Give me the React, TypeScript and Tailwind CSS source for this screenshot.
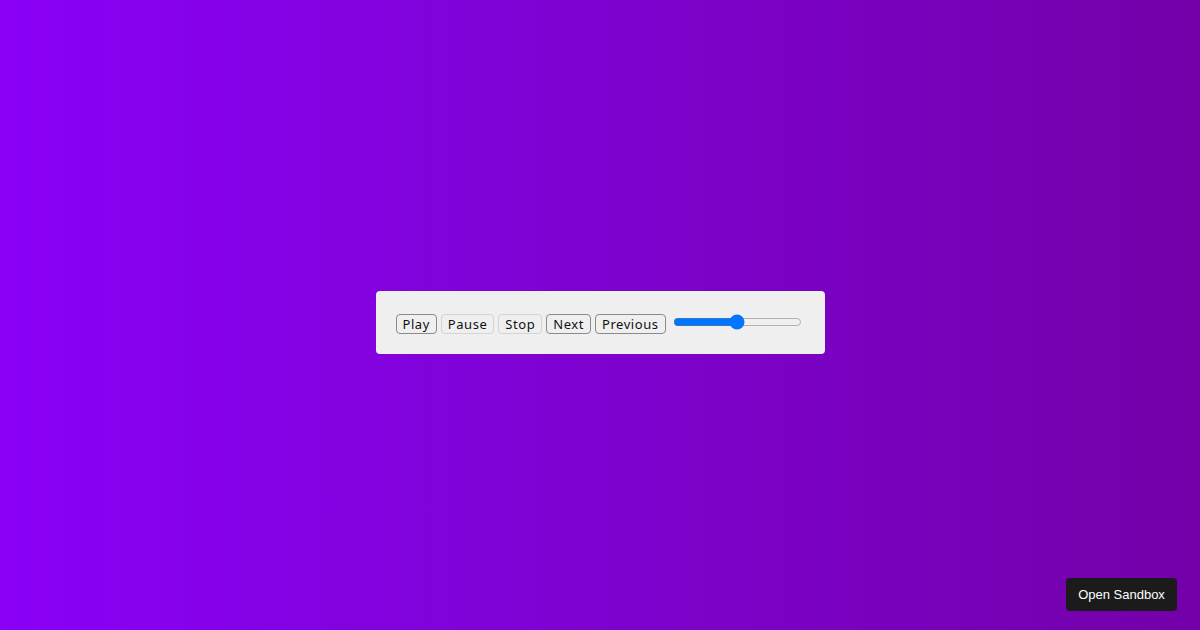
import React from "react";

const btn =
  "h-[20px] px-[6px] rounded-[4px] border bg-[#efefef] text-[13px] leading-none tracking-[0.55px] text-[#111] flex items-center";

export default function App() {
  return (
    <div className="relative w-full h-[630px] bg-gradient-to-r from-[#8a00f8] to-[#7300a9] flex items-center justify-center pt-[15px] font-['Noto_Sans',sans-serif]">
      <div className="w-[449px] h-[63px] bg-[#efefef] rounded-[4px] flex items-center pl-[20px] pt-[3px] gap-[4px]">
        <button className={`${btn} border-[#8a8a8a]`}>Play</button>
        <button className={`${btn} border-[#d4d4d4]`}>Pause</button>
        <button className={`${btn} border-[#d4d4d4]`}>Stop</button>
        <button className={`${btn} border-[#8a8a8a]`}>Next</button>
        <button className={`${btn} border-[#8a8a8a]`}>Previous</button>
        <input type="range" defaultValue={50} className="w-[129px] ml-[3px] mb-[4px] accent-[#0075ff]" />
      </div>
      <button className="absolute right-[23px] bottom-[19px] w-[111px] h-[33px] rounded-[4px] bg-[#1b1b1b] text-white text-[13px] font-['Liberation_Sans',Arial,sans-serif]">
        Open Sandbox
      </button>
    </div>
  );
}
